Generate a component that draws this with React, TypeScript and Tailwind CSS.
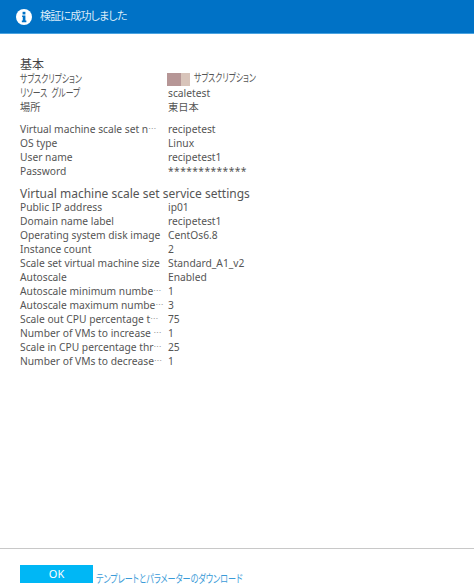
const font = { fontFamily: '"Noto Sans", "Noto Sans CJK JP", sans-serif' };

type Row = [string, string, boolean?];

const basics: Row[] = [["場所", "東日本"]];

const vm: Row[] = [
  ["Virtual machine scale set n", "recipetest", true],
  ["OS type", "Linux"],
  ["User name", "recipetest1"],
];

const service: Row[] = [
  ["Public IP address", "ip01"],
  ["Domain name label", "recipetest1"],
  ["Operating system disk image", "CentOs6.8"],
  ["Instance count", "2"],
  ["Scale set virtual machine size", "Standard_A1_v2"],
  ["Autoscale", "Enabled"],
  ["Autoscale minimum numbe", "1", true],
  ["Autoscale maximum numbe", "3", true],
  ["Scale out CPU percentage t", "75", true],
  ["Number of VMs to increase ", "1", true],
  ["Scale in CPU percentage thr", "25", true],
  ["Number of VMs to decrease", "1", true],
];

// Kana in the shot is a condensed UI face, so squeeze the CJK font to fit
function Kana({ children }: { children: React.ReactNode }) {
  return (
    <span className="inline-block origin-left -translate-y-px scale-x-[0.71] whitespace-pre text-[11px] [font-feature-settings:'palt'] [word-spacing:3px]">
      {children}
    </span>
  );
}

function DetailRow({ row: [label, value, cut] }: { row: Row }) {
  return (
    <div className="flex h-[14px] items-center text-[10.25px] leading-[14px] text-[#555] [font-feature-settings:'palt']">
      <div className="flex w-[148px] flex-none whitespace-pre">
        <span>{label}</span>
        {cut && <span className="text-[8px] text-[#999]">⋯</span>}
      </div>
      <div className="min-w-0 flex-1 whitespace-pre">{value}</div>
    </div>
  );
}

export default function App() {
  return (
    <div className="flex h-[588px] w-[474px] flex-col overflow-hidden bg-white" style={font}>
      <div className="flex h-[33px] flex-none items-center gap-[8px] bg-[#0072c6] pl-[16px]">
        <svg width="16" height="16" viewBox="0 0 17 17" aria-hidden>
          <circle cx="8.5" cy="8.5" r="8.5" fill="#fff" />
          <rect x="7" y="3" width="3" height="2.8" fill="#0072c6" />
          <path d="M6.5 7h3.5v5.2h1V14H6.2v-1.8h1V8.6H6.5z" fill="#0072c6" />
        </svg>
        <span className="text-[11px] tracking-[-0.8px] text-[#dcecf8] [font-feature-settings:'palt']">
          検証に成功しました
        </span>
      </div>
      <div className="h-px flex-none bg-[#4aa3e0]" />

      <div className="flex-1 pl-[20px] pr-[20px] pt-[23px]">
        <div className="text-[12px] leading-[15px] text-[#444]">基本</div>
        <div className="flex h-[14px] items-center leading-[14px] text-[#555]">
          <div className="w-[147px] flex-none">
            <Kana>サブスクリプション</Kana>
          </div>
          <div className="mr-[4px] flex h-[13px] w-[23px] flex-none">
            <div className="w-[14px] bg-[#b69696]" />
            <div className="w-[9px] bg-[#d8c4ba]" />
          </div>
          <Kana>サブスクリプション</Kana>
        </div>
        <div className="flex h-[14px] items-center leading-[14px] text-[#555]">
          <div className="w-[148px] flex-none">
            <Kana>リソース グループ</Kana>
          </div>
          <div className="text-[10.25px]">scaletest</div>
        </div>
        {basics.map((r) => (
          <DetailRow key={r[0]} row={r} />
        ))}

        <div className="mt-[8px]">
          {vm.map((r) => (
            <DetailRow key={r[0]} row={r} />
          ))}
          <div className="flex h-[14px] items-center text-[10.25px] leading-[14px] text-[#555]">
            <div className="w-[148px] flex-none">Password</div>
            <div className="tracking-[0.42px]">*************</div>
          </div>
        </div>

        <div className="mt-[9px] text-[12px] leading-[13px] text-[#555]">
          Virtual machine scale set service settings
        </div>
        {service.map((r) => (
          <DetailRow key={r[0]} row={r} />
        ))}
      </div>

      <div className="h-[40px] flex-none border-t border-[#c8c8c8] pl-[20px] pt-[16px]">
        <div className="flex items-end gap-[3px]">
          <button className="h-[18px] w-[73px] flex-none bg-[#00b7f5] text-[11px] leading-[18px] text-white">
            OK
          </button>
          <a className="mb-[-1px] inline-block origin-left scale-x-[0.735] whitespace-pre text-[11px] leading-[11px] text-[#3a9bd8] [font-feature-settings:'palt']">
            テンプレートとパラメーターのダウンロード
          </a>
        </div>
      </div>
    </div>
  );
}
